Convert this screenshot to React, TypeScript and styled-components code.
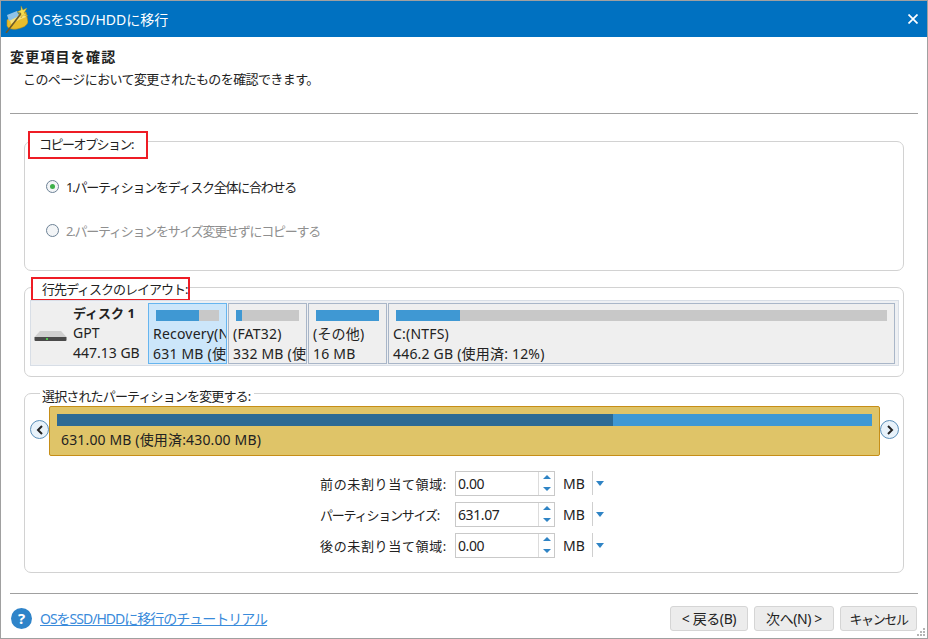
import React from 'react';
import styled, { createGlobalStyle } from 'styled-components';

const GlobalStyle = createGlobalStyle`
  html, body { margin: 0; padding: 0; background: #fff; }
  * { box-sizing: border-box; }
`;

const Window = styled.div`
  position: relative;
  width: 928px;
  height: 639px;
  display: flex;
  flex-direction: column;
  background: #fff;
  border: 1px solid #a0a0a0;
  color: #222;
  font-family: "Noto Sans", "Noto Sans CJK JP", sans-serif;
  font-size: 13px;
  letter-spacing: -0.75px;
  overflow: hidden;
`;

const TitleBar = styled.div`
  height: 36px;
  flex: none;
  background: #0071c1;
  color: #fff;
  display: flex;
  align-items: center;
  padding: 0 9px 0 4px;
  gap: 4px;
  font-size: 14px;
  letter-spacing: 0;
`;

const TitleText = styled.div`
  flex: 1;
`;

const Head = styled.div`
  height: 76px;
  flex: none;
  padding: 10px 9px 0;
`;

const Heading = styled.div`
  font-weight: 700;
  font-size: 14px;
  line-height: 20px;
  letter-spacing: 1.2px;
`;

const SubText = styled.div`
  font-size: 13px;
  line-height: 20px;
  margin: 2px 0 0 13px;
  letter-spacing: -0.6px;
`;

const Rule = styled.div<{ $top?: number }>`
  height: 1px;
  flex: none;
  margin: ${p => p.$top || 0}px 9px 0;
  background: #a0a0a0;
`;

const Group = styled.section<{ $height: number; $top: number }>`
  flex: none;
  height: ${p => p.$height}px;
  margin: ${p => p.$top}px 23px 0;
  border: 1px solid #d2d2d2;
  border-radius: 7px;
  background: #fff;
`;

const Legend = styled.div<{ $marked?: boolean; $left: number; $top: number; $w: number; $h: number; $spacing: number; $lift?: number }>`
  width: ${p => p.$w}px;
  height: ${p => p.$h}px;
  margin: ${p => p.$top}px 0 0 ${p => p.$left}px;
  padding: 0 0 ${p => p.$lift || 0}px ${p => (p.$marked ? 9 : 2)}px;
  background: #fff;
  display: flex;
  align-items: center;
  white-space: nowrap;
  letter-spacing: ${p => p.$spacing}px;
  border: ${p => (p.$marked ? '2px solid #ee1c25' : '0')};
`;

const RadioList = styled.div`
  display: flex;
  flex-direction: column;
  gap: 24px;
  margin-top: 17px;
`;

const RadioRow = styled.label<{ $disabled?: boolean }>`
  display: flex;
  align-items: center;
  height: 20px;
  gap: 7px;
  letter-spacing: -1.25px;
  color: ${p => (p.$disabled ? '#8f8f8f' : '#222')};
  margin-left: 21px;
`;

const RadioDot = styled.span<{ $checked?: boolean }>`
  width: 13px;
  height: 13px;
  flex: none;
  border-radius: 50%;
  border: 1.5px solid #6d8296;
  background: #f3f5f7;
  display: flex;
  align-items: center;
  justify-content: center;
  &::after {
    content: '';
    width: 5px;
    height: 5px;
    border-radius: 50%;
    background: ${p => (p.$checked ? '#3db049' : 'transparent')};
  }
`;

const DiskStrip = styled.div`
  height: 66px;
  margin: -1px 4px 0 5px;
  padding: 2px 3px 2px 0;
  background: #eef0f3;
  border: 1px solid #d8dee6;
  display: grid;
  grid-template-columns: 116px 79px 79px 79px 1fr;
  column-gap: 1px;
  font-size: 14px;
  letter-spacing: 0;
`;

const DiskInfo = styled.div`
  background: #efefef;
  position: relative;
  display: flex;
  align-items: center;
  height: 61px;
`;

const DiskLines = styled.div`
  margin: -2px 0 0 42px;
  line-height: 20px;
  white-space: nowrap;
`;

const DiskName = styled.div`
  font-weight: 700;
  font-size: 13px;
`;

const HddIcon = styled.svg`
  position: absolute;
  left: 3px;
  top: 28px;
`;

const Cell = styled.div<{ $selected?: boolean }>`
  height: 61px;
  overflow: hidden;
  padding: 6px 4px 0 4px;
  background: ${p => (p.$selected ? '#cce6fa' : '#efefef')};
  border: 1px solid ${p => (p.$selected ? '#66b5ef' : '#a9b6c8')};
  white-space: nowrap;
  line-height: 20px;
  letter-spacing: 0.2px;
`;

const UsageTrack = styled.div`
  height: 11px;
  margin: 0 3px 3px;
  background: #c8c8c8;
`;

const UsageFill = styled.div`
  height: 100%;
  background: #3f98d3;
`;

const SizeRow = styled.div`
  display: flex;
  align-items: flex-start;
  margin: 1px 4px 0 5px;
`;

const RoundArrow = styled.button`
  width: 19px;
  height: 19px;
  flex: none;
  padding: 0;
  margin-top: 14px;
  border-radius: 50%;
  border: 1px solid #5b8fb9;
  background: #e8f2fa;
  display: flex;
  align-items: center;
  justify-content: center;
`;

const GoldBar = styled.div`
  flex: 1;
  height: 50px;
  padding: 7px 7px 0;
  background: #dfc468;
  border: 1px solid #c68e17;
  border-radius: 2px;
`;

const SizeTrack = styled.div`
  height: 12px;
  background: #3f98d3;
`;

const SizeFill = styled.div`
  height: 100%;
  background: #2c6a94;
`;

const SizeText = styled.div`
  margin: 4px 0 0 4px;
  line-height: 20px;
  font-size: 14px;
  letter-spacing: 0.15px;
`;

const FieldList = styled.div`
  display: flex;
  flex-direction: column;
  gap: 5px;
  margin: 14px 0 0 295px;
`;

const FieldRow = styled.div`
  display: flex;
  align-items: center;
  height: 26px;
`;

const FieldLabel = styled.div<{ $spacing: number }>`
  width: 135px;
  white-space: nowrap;
  letter-spacing: ${p => p.$spacing}px;
`;

const Spinner = styled.div`
  width: 100px;
  height: 25px;
  display: flex;
  border: 1px solid #c9c9c9;
  background: #fff;
`;

const SpinValue = styled.div`
  flex: 1;
  padding-left: 2px;
  line-height: 23px;
  font-size: 14px;
  letter-spacing: -0.4px;
`;

const SpinButtons = styled.div`
  width: 16px;
  border-left: 1px solid #dcdcdc;
  display: flex;
  flex-direction: column;
  align-items: center;
  justify-content: space-around;
`;

const SpinArrow = styled.span<{ $down?: boolean }>`
  width: 0;
  height: 0;
  border-left: 4px solid transparent;
  border-right: 4px solid transparent;
  ${p => (p.$down ? 'border-top: 4px solid #2f84c5;' : 'border-bottom: 4px solid #2f84c5;')}
`;

const Unit = styled.div`
  width: 37px;
  padding-left: 8px;
  font-size: 14px;
  letter-spacing: 0;
`;

const UnitMenu = styled.div`
  height: 24px;
  padding-left: 3px;
  border-left: 1px solid #cfcfcf;
  display: flex;
  align-items: center;
`;

const Footer = styled.div`
  flex: 1;
  display: flex;
  align-items: center;
  padding: 4px 10px 0 10px;
`;

const HelpIcon = styled.span`
  width: 21px;
  height: 21px;
  flex: none;
  border-radius: 50%;
  background: #2f84c9;
  color: #fff;
  font-weight: 700;
  font-size: 15px;
  letter-spacing: 0;
  display: flex;
  align-items: center;
  justify-content: center;
`;

const HelpLink = styled.a`
  margin-left: 8px;
  flex: 1;
  color: #3a8bdb;
  text-decoration: underline;
  font-size: 14px;
  letter-spacing: -1px;
`;

const FooterButton = styled.button<{ $w: number; $size: number; $spacing: number }>`
  width: ${p => p.$w}px;
  height: 25px;
  margin-left: 6px;
  padding: 0;
  background: #ececec;
  border: 1px solid #d5d5d5;
  border-radius: 3px;
  color: #222;
  font-family: inherit;
  font-size: ${p => p.$size}px;
  letter-spacing: ${p => p.$spacing}px;
`;

const Grip = styled.svg`
  position: absolute;
  right: 1px;
  bottom: 1px;
`;

function AppLogo() {
  return (
    <svg width="23" height="28" viewBox="0 0 23 28">
      <path d="M2 15 Q10 9 21 7 L23 17 Q22 22 12 24 Q4 25 2 21 Z" fill="#e8bd2c" stroke="#b98a14" strokeWidth="0.6" />
      <path d="M5 15 Q12 11 19 9 L21 12 Q13 15 6 19 Z" fill="#f7e27a" />
      <path d="M2 10 L12 6 L14 11 L4 16 Z" fill="#8fc3e8" />
      <path d="M1 28 L18 6" stroke="#6b5a2b" strokeWidth="1.6" />
      <path d="M16 1 L18 5 L22 3 L19 8 L23 11 L18 10 L16 13 L16 8 L12 7 L16 5 Z" fill="#f6dc4e" stroke="#a88a1b" strokeWidth="0.4" />
    </svg>
  );
}

function CloseIcon() {
  return (
    <svg width="10" height="10" viewBox="0 0 10 10">
      <path d="M0.5 0.5 L9.5 9.5 M9.5 0.5 L0.5 9.5" stroke="#fff" strokeWidth="1.7" />
    </svg>
  );
}

function Hdd() {
  return (
    <HddIcon width="33" height="11" viewBox="0 0 33 11">
      <path d="M6 0 L27 0 L32.5 6 L0.5 6 Z" fill="#cfcfcf" />
      <path d="M0.5 6 L32.5 6 L32.5 9 Q32.5 10 31.5 10 L1.5 10 Q0.5 10 0.5 9 Z" fill="#4a4a4a" />
      <rect x="12" y="7" width="2" height="2" fill="#4fc34f" />
    </HddIcon>
  );
}

function Chevron({ right }: { right?: boolean }) {
  return (
    <svg width="8" height="10" viewBox="0 0 8 10">
      <path d={right ? 'M2 1 L6 5 L2 9' : 'M6 1 L2 5 L6 9'} fill="none" stroke="#222" strokeWidth="2" />
    </svg>
  );
}

function MenuCaret() {
  return (
    <svg width="8" height="5" viewBox="0 0 8 5">
      <path d="M0 0 H8 L4 5 Z" fill="#2f84c5" />
    </svg>
  );
}

const partitions = [
  { top: 'Recovery(NTFS)', bottom: '631 MB (使用済', used: 68, selected: true },
  { top: '(FAT32)', bottom: '332 MB (使用済', used: 10 },
  { top: '(その他)', bottom: '16 MB', used: 100 },
  { top: 'C:(NTFS)', bottom: '446.2 GB (使用済: 12%)', used: 13 },
];

const fields = [
  { label: '前の未割り当て領域:', value: '0.00', spacing: 0.65 },
  { label: 'パーティションサイズ:', value: '631.07', spacing: -1.2 },
  { label: '後の未割り当て領域:', value: '0.00', spacing: 0.65 },
];

export default function App() {
  return (
    <Window>
      <GlobalStyle />
      <TitleBar>
        <AppLogo />
        <TitleText>OSをSSD/HDDに移行</TitleText>
        <CloseIcon />
      </TitleBar>
      <Head>
        <Heading>変更項目を確認</Heading>
        <SubText>このページにおいて変更されたものを確認できます。</SubText>
      </Head>
      <Rule />

      <Group $height={130} $top={27}>
        <Legend $marked $left={3} $top={-11} $w={120} $h={28} $spacing={-1.5} $lift={3}>コピーオプション:</Legend>
        <RadioList>
          <RadioRow>
            <RadioDot $checked />
            1.パーティションをディスク全体に合わせる
          </RadioRow>
          <RadioRow $disabled>
            <RadioDot />
            2.パーティションをサイズ変更せずにコピーする
          </RadioRow>
        </RadioList>
      </Group>

      <Group $height={90} $top={16}>
        <Legend $marked $left={6} $top={-11} $w={159} $h={24} $spacing={-1} $lift={1}>行先ディスクのレイアウト:</Legend>
        <DiskStrip>
          <DiskInfo>
            <Hdd />
            <DiskLines>
              <DiskName>ディスク 1</DiskName>
              <div>GPT</div>
              <div>447.13 GB</div>
            </DiskLines>
          </DiskInfo>
          {partitions.map(part => (
            <Cell key={part.top} $selected={part.selected}>
              <UsageTrack>
                <UsageFill style={{ width: `${part.used}%` }} />
              </UsageTrack>
              <div>{part.top}</div>
              <div>{part.bottom}</div>
            </Cell>
          ))}
        </DiskStrip>
      </Group>

      <Group $height={180} $top={16}>
        <Legend $left={15} $top={-9} $w={214} $h={20} $spacing={-0.85}>選択されたパーティションを変更する:</Legend>
        <SizeRow>
          <RoundArrow><Chevron /></RoundArrow>
          <GoldBar>
            <SizeTrack>
              <SizeFill style={{ width: '68.2%' }} />
            </SizeTrack>
            <SizeText>631.00 MB (使用済:430.00 MB)</SizeText>
          </GoldBar>
          <RoundArrow><Chevron right /></RoundArrow>
        </SizeRow>
        <FieldList>
          {fields.map(field => (
            <FieldRow key={field.label}>
              <FieldLabel $spacing={field.spacing}>{field.label}</FieldLabel>
              <Spinner>
                <SpinValue>{field.value}</SpinValue>
                <SpinButtons>
                  <SpinArrow />
                  <SpinArrow $down />
                </SpinButtons>
              </Spinner>
              <Unit>MB</Unit>
              <UnitMenu><MenuCaret /></UnitMenu>
            </FieldRow>
          ))}
        </FieldList>
      </Group>

      <Rule $top={20} />
      <Footer>
        <HelpIcon>?</HelpIcon>
        <HelpLink href="#">OSをSSD/HDDに移行のチュートリアル</HelpLink>
        <FooterButton $w={78} $size={14} $spacing={-0.4}>&lt; 戻る(B)</FooterButton>
        <FooterButton $w={80} $size={14} $spacing={-0.4}>次へ(N) &gt;</FooterButton>
        <FooterButton $w={77} $size={13} $spacing={-1.4}>キャンセル</FooterButton>
      </Footer>
      <Grip width="10" height="10" viewBox="0 0 10 10">
        <g fill="#b5b5b5">
          <rect x="7" y="1" width="2" height="2" />
          <rect x="4" y="4" width="2" height="2" />
          <rect x="7" y="4" width="2" height="2" />
          <rect x="1" y="7" width="2" height="2" />
          <rect x="4" y="7" width="2" height="2" />
          <rect x="7" y="7" width="2" height="2" />
        </g>
      </Grip>
    </Window>
  );
}
